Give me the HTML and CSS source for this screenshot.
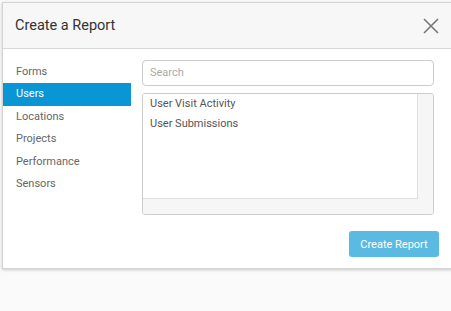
FILE: index.html
```html
<!DOCTYPE html>
<html>
<head>
<meta charset="utf-8">
<link rel="stylesheet" href="styles.css">
</head>
<body>
<div class="modal">
  <div class="modal-header">
    <span class="title">Create a Report</span>
    <svg class="close" width="16" height="16" viewBox="0 0 16 16"><path d="M1 1L15 15M15 1L1 15" stroke="#777" stroke-width="1.6" fill="none"/></svg>
  </div>
  <div class="modal-body">
    <ul class="nav">
      <li>Forms</li>
      <li class="active">Users</li>
      <li>Locations</li>
      <li>Projects</li>
      <li>Performance</li>
      <li>Sensors</li>
    </ul>
    <div class="main">
      <div class="search">Search</div>
      <div class="list">
        <div class="list-inner">
          <div class="item">User Visit Activity</div>
          <div class="item">User Submissions</div>
        </div>
        <div class="vscroll"></div>
        <div class="hscroll"></div>
      </div>
    </div>
  </div>
  <div class="modal-footer">
    <button class="btn">Create Report</button>
  </div>
</div>
</body>
</html>
```
FILE: styles.css
```css
html, body { margin: 0; padding: 0; }
body {
  background: #fafafa;
  font-family: Roboto, "Liberation Sans", sans-serif;
  width: 451px;
  height: 311px;
  overflow: hidden;
  padding: 2px 0 0 2px;
  box-sizing: border-box;
}
.modal {
  width: 460px;
  background: #fff;
  border: 1px solid #d4d4d4;
  box-shadow: 0 1px 3px rgba(0,0,0,0.2);
}
.modal-header {
  height: 45px;
  background: #f7f7f7;
  border-bottom: 1px solid #d8d8d8;
  display: flex;
  align-items: center;
  padding: 0 0 0 12px;
  position: relative;
}
.title { font-size: 14.5px; color: #333; }
.close { position: absolute; left: 420px; top: 15px; }
.modal-body {
  display: flex;
  padding-top: 11px;
}
.nav {
  list-style: none;
  margin: 1px 0 0 0;
  padding: 0;
  width: 128px;
}
.nav li {
  height: 22.4px;
  line-height: 22.4px;
  padding-left: 13px;
  font-size: 11px;
  color: #666;
}
.nav li.active { background: #0a96d4; color: #fff; }
.main {
  margin-left: 11px;
  width: 292px;
}
.search {
  height: 24px;
  border: 1px solid #ccc;
  border-radius: 4px;
  font-size: 11px;
  color: #aaa;
  line-height: 24px;
  padding-left: 7px;
}
.list {
  margin-top: 7px;
  height: 120px;
  border: 1px solid #ccc;
  border-radius: 3px;
  background: #f6f6f6;
  display: grid;
  grid-template-columns: 275px 1fr;
  grid-template-rows: 105px 1fr;
  overflow: hidden;
}
.list-inner {
  background: #fff;
  border-right: 1px solid #e0e0e0;
  border-bottom: 1px solid #e0e0e0;
  padding-top: 0;
}
.item {
  font-size: 11px;
  color: #555;
  height: 20px;
  line-height: 20px;
  padding-left: 7px;
}
.vscroll { background: #f6f6f6; }
.hscroll { grid-column: 1 / span 2; background: #f6f6f6; }
.modal-footer {
  display: flex;
  padding: 16px 0 11px 346px;
}
.btn {
  width: 90px;
  height: 26px;
  border: none;
  border-radius: 3px;
  background: #5bbae2;
  color: #fff;
  font-family: Roboto, "Liberation Sans", sans-serif;
  font-size: 11px;
  padding: 0;
}
```
